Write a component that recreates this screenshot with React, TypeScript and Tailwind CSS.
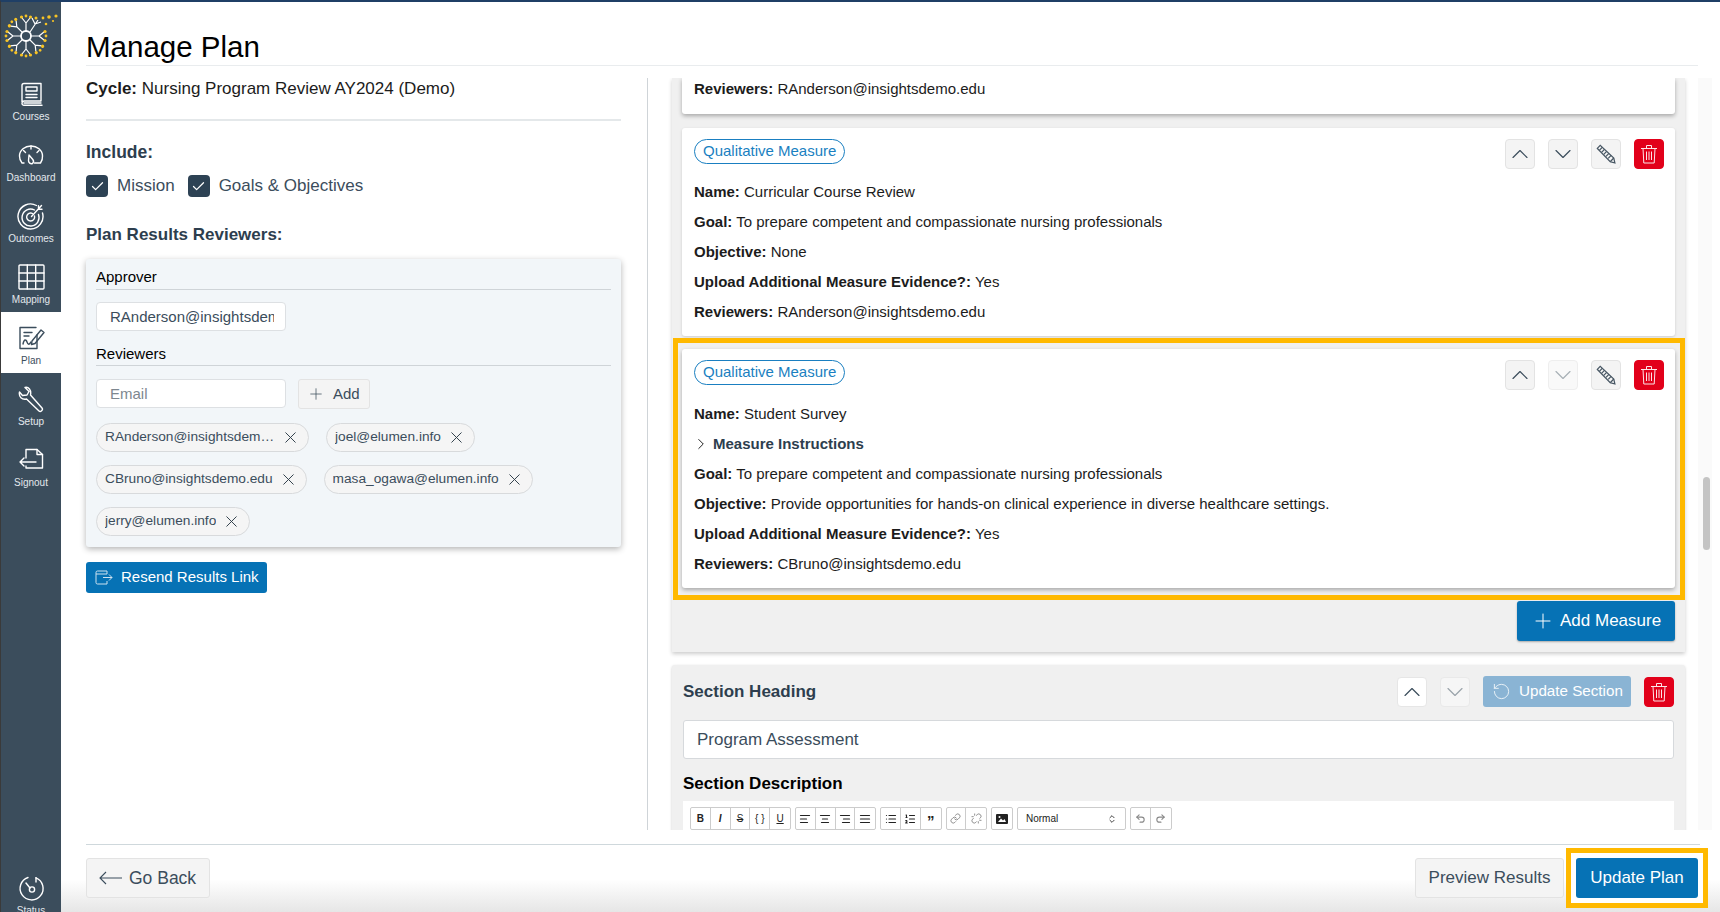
import React from "react";
import { ChevronUp, ChevronDown, ChevronRight, Plus, X, Check, RotateCw, AlignLeft, AlignCenter, AlignRight, AlignJustify, List, ListOrdered, Link, Unlink, Undo2, Redo2, ChevronsUpDown } from "lucide-react";

const Logo = () => {
  const cx = 24, cy = 34;
  const angles = [0, 45, 90, 135, 180, 225, 270];
  return (
    <svg width="60" height="60" viewBox="0 0 60 60" className="block">
      <circle cx={cx} cy={cy} r="5" fill="none" stroke="#fff" strokeWidth="1.8" />
      {angles.map((a) => (
        <g key={a} transform={`rotate(${a} ${cx} ${cy})`}>
          <path d={`M${cx + 5} ${cy}H${cx + 14}M${cx + 13} ${cy}l5 -4M${cx + 13} ${cy}l5 4`} stroke="#fff" strokeWidth="1.2" fill="none" />
          <circle cx={cx + 19} cy={cy - 4.5} r="1.6" fill="#f7c325" />
          <circle cx={cx + 19} cy={cy + 4.5} r="1.6" fill="#f7c325" />
          <circle cx={cx + 20} cy={cy} r="1.4" fill="#f7c325" />
        </g>
      ))}
      <path d="M28 30L36 18M33 22L30 16M33 22L39 20" stroke="#fff" strokeWidth="1.2" fill="none" />
      <circle cx="44" cy="22" r="1.3" fill="#f7c325" />
      <circle cx="47" cy="15" r="1.8" fill="#f7c325" />
      <circle cx="54" cy="14" r="1.6" fill="#f7c325" />
      <circle cx="51" cy="19" r="1.1" fill="#f7c325" />
      <circle cx="34" cy="16" r="1.5" fill="#f7c325" />
      <circle cx="41" cy="16" r="1.4" fill="#f7c325" />
    </svg>
  );
};

const stroke = { fill: "none", stroke: "currentColor", strokeWidth: 1.4, strokeLinecap: "round" as const, strokeLinejoin: "round" as const };
const S = ({ children }: { children: React.ReactNode }) => (
  <svg width="28" height="28" viewBox="0 0 28 28" {...stroke}>{children}</svg>
);
const icons: Record<string, React.ReactNode> = {
  Courses: <S><path d="M5 22V5.5A2 2 0 0 1 7 3.5H24V21H7A2.2 2.2 0 0 0 5 23A2 2 0 0 0 7 25.3H25" /><rect x="9" y="7" width="11" height="4" /><path d="M9 14.5H20M9 17.5H20M7 23H24" /></S>,
  Dashboard: <S><path d="M7 22H5A10.5 10.5 0 0 1 2.5 15C2.5 9 8 5 14 5S25.5 9 25.5 15A10.5 10.5 0 0 1 23.5 22H17.5" /><path d="M15.5 22.5A3 3 0 0 1 11.5 19.5L12 14L15.8 18.5A3 3 0 0 1 15.5 22.5Z" /><path d="M14 5V8M6.5 9.5L8.5 11.5M22 9.5L20 11.5" /></S>,
  Outcomes: <S><path d="M19.5 3.5A12.5 12.5 0 1 0 25.5 11" /><path d="M17.5 8A8.5 8.5 0 1 0 21.5 12.5" /><path d="M15.5 11.5A4 4 0 1 0 17.5 14" /><path d="M14.5 14.5L24.5 3.5M21.5 3.8V7.3H25" /></S>,
  Mapping: <S><rect x="2" y="2" width="25" height="24" rx="1" /><path d="M2 10H27M2 18H27M10.3 2V26M18.7 2V26" /></S>,
  Plan: <S><path d="M20 11V24.5H3V3.5H19" /><path d="M7 8.5H15M7 12H12M6 20C7 15 9 15 10 18S12 21 14 18" /><path d="M15 17L24 6L27 8.5L18 19.5L14.5 20.5Z" /></S>,
  Setup: <S><path d="M8 2.5L12 6.5L10 10L5.5 10.5L2.5 7C1.5 12 5 15 9.5 14L22 26C23.5 27.5 26.5 25 25 23L13.5 10C14.5 5 11.5 1.5 8 2.5Z" /></S>,
  Signout: <S><path d="M9 12V3.5H20L25.5 8.5V22H9V20" /><path d="M20 3.5V8.5H25.5" /><path d="M19 16H3M7 12L3 16L7 20" /></S>,
  Status: <S><path d="M11 3.5A11.5 11.5 0 1 0 19 3.8" /><path d="M19 3.8V8" /><circle cx="15" cy="15.5" r="2.6" /><path d="M13 14L9 9" /></S>,
};

const NavItem = ({ name, active }: { name: string; active?: boolean }) => (
  <div className={`h-[61px] flex flex-col items-center pt-[12px] ${active ? "bg-white text-[#3b4d5c]" : "text-white"}`}>
    <div className="h-[28px] flex items-center">{icons[name]}</div>
    <div className={`mt-[2px] text-[10px] leading-[14px] ${active ? "text-[#3b4d5c]" : "text-[#e3e8ec]"}`}>{name}</div>
  </div>
);

const Trash = () => (
  <svg width="18" height="20" viewBox="0 0 18 20" fill="none" stroke="#fff" strokeWidth="1" opacity="0.9">
    <path d="M1 4.5H17M3 4.5L3.8 19H14.2L15 4.5M6.5 4.5V1.5H11.5V4.5M6.5 7.5V16M9 7.5V16M11.5 7.5V16" />
  </svg>
);

const IconBtn = ({ children, className = "" }: { children: React.ReactNode; className?: string }) => (
  <div className={`w-[30px] h-[30px] rounded-[4px] border flex items-center justify-center ${className}`}>{children}</div>
);

const PencilIcon = () => (
  <svg width="20" height="20" viewBox="0 0 18 18" fill="none" stroke="#475663" strokeWidth="1.1">
    <path d="M1.2 4L3.8 1.2L16 12.6L17 17L12.8 16Z" />
    <path d="M3 5.8L5.6 3M5 7.6L7.6 4.8M7 9.4L9.6 6.6M9 11.2L11.6 8.4M11 13L13.6 10.2M12.8 16L16 12.6" />
  </svg>
);

const Actions = ({ downDisabled }: { downDisabled?: boolean }) => (
  <div className="flex gap-[13px]">
    <IconBtn className="bg-[#f4f4f4] border-[#e3e3e3]"><ChevronUp size={28} strokeWidth={1} className="text-[#3b4d5c]" /></IconBtn>
    <IconBtn className={downDisabled ? "bg-[#f9f9f9] border-[#eeeeee]" : "bg-[#f4f4f4] border-[#e3e3e3]"}>
      <ChevronDown size={28} strokeWidth={1} className={downDisabled ? "text-[#a8b0b6]" : "text-[#3b4d5c]"} />
    </IconBtn>
    <IconBtn className="bg-[#f4f4f4] border-[#e3e3e3]"><PencilIcon /></IconBtn>
    <IconBtn className="bg-[#e2001a] border-[#e2001a]"><Trash /></IconBtn>
  </div>
);

const Line = ({ k, v }: { k: string; v: string }) => (
  <div className="h-[30px] leading-[30px]"><b className="font-bold">{k}</b> {v}</div>
);

const Pill = () => (
  <div className="inline-flex items-center h-[25px] px-[8px] rounded-full border border-[#1a7fc1] text-[#1a7fc1] bg-white text-[15px]">Qualitative Measure</div>
);

const Chip = ({ t, w }: { t: string; w?: string }) => (
  <div className="inline-flex items-center h-[29px] pl-[8px] pr-[8px] rounded-full border border-[#d8dadc] bg-[#f5f5f5] text-[13.7px] text-[#3b4d5c]">
    <span className={`truncate ${w ?? ""}`}>{t}</span>
    <X size={19} strokeWidth={1.2} className="ml-[6px] text-[#2b3a46]" />
  </div>
);

const Tb = ({ children, dim }: { children: React.ReactNode; dim?: boolean }) => (
  <div className={`w-[19.8px] h-[21px] flex items-center justify-center border-r last:border-r-0 border-[#cccccc] text-[10px] ${dim ? "text-[#888888]" : "text-[#222222]"}`}>{children}</div>
);
const TbGroup = ({ children }: { children: React.ReactNode }) => (
  <div className="flex border border-[#cccccc] rounded-[2px] bg-white">{children}</div>
);

const Field = ({ children, muted }: { children: React.ReactNode; muted?: boolean }) => (
  <div className={`w-[190px] h-[29px] rounded-[4px] border border-[#dde0e3] bg-white pl-[13px] pr-[11px] text-[15px] leading-[27px] ${muted ? "text-[#7d8790]" : "text-[#3b4d5c]"}`}>
    <div className="overflow-hidden whitespace-nowrap">{children}</div>
  </div>
);

export default function App() {
  return (
    <div className="w-[1720px] h-[912px] overflow-hidden flex bg-white text-[#1c1c1c] font-['Liberation_Sans',Arial,sans-serif]">
      <aside className="w-[61px] shrink-0 h-full bg-[#3b4d5c] border-l border-[#3a3a3a] flex flex-col border-t-2 border-t-[#1f3f66]">
        <div className="h-[66px] pl-[1px]"><Logo /></div>
        {["Courses", "Dashboard", "Outcomes", "Mapping"].map((n) => <NavItem key={n} name={n} />)}
        <NavItem name="Plan" active />
        {["Setup", "Signout"].map((n) => <NavItem key={n} name={n} />)}
        <div className="mt-auto mb-[-11px]"><NavItem name="Status" /></div>
      </aside>

      <main className="flex-1 min-w-0 flex flex-col border-t-2 border-[#1f3f66]">
        <div className="h-[64px] ml-[25px] mr-[22px] border-b border-[#e9ecee] flex items-end shrink-0">
          <h1 className="text-[29.5px] leading-[34px] mb-[1px] text-black">Manage Plan</h1>
        </div>

        <div className="h-[752px] mt-[12px] shrink-0 flex overflow-hidden">
          {/* left */}
          <section className="w-[587px] shrink-0 pl-[25px] pr-[26px] border-r border-[#cfd4d8]">
            <div className="h-[21px] mt-0 text-[17px] leading-[21px]"><b>Cycle:</b> Nursing Program Review AY2024 (Demo)</div>
            <div className="h-[2px] bg-[#e4e8ea] mt-[20px]" />
            <div className="mt-[20px] text-[17.5px] leading-[22px] font-bold text-[#2d3e4e]">Include:</div>
            <div className="mt-[12px] flex items-center text-[17px] leading-[22px] text-[#3b4d5c]">
              <span className="w-[22px] h-[22px] rounded-[4px] bg-[#2d4254] flex items-center justify-center"><Check size={15} strokeWidth={2} className="text-white" /></span>
              <span className="ml-[9px]">Mission</span>
              <span className="w-[22px] h-[22px] ml-[13px] rounded-[4px] bg-[#2d4254] flex items-center justify-center"><Check size={15} strokeWidth={2} className="text-white" /></span>
              <span className="ml-[9px]">Goals &amp; Objectives</span>
            </div>
            <div className="mt-[27px] text-[17px] leading-[22px] font-bold text-[#2d3e4e]">Plan Results Reviewers:</div>
            <div className="mt-[13px] h-[288px] bg-[#f2f6f9] rounded-[3px] shadow-[0_2px_6px_rgba(0,0,0,0.3)] px-[10px] pt-[8px]">
              <div className="h-[23px] border-b border-[#cfd4d8] text-[15px] leading-[20px] text-black">Approver</div>
              <div className="mt-[12px]"><Field>RAnderson@insightsdemo.edu</Field></div>
              <div className="mt-[13px] h-[22px] border-b border-[#cfd4d8] text-[15px] leading-[20px] text-black">Reviewers</div>
              <div className="mt-[13px] flex items-start gap-[12px]">
                <Field muted>Email</Field>
                <div className="w-[72px] h-[30px] rounded-[3px] border border-[#e3e3e3] bg-[#f4f4f4] flex items-center pl-[8px] text-[15px] text-[#3b4d5c]"><Plus size={18} strokeWidth={1} className="mr-[8px]" />Add</div>
              </div>
              <div className="mt-[14px] flex gap-[17px]">
                <Chip t="RAnderson@insightsdemo.edu" w="w-[170px]" /><Chip t="joel@elumen.info" />
              </div>
              <div className="mt-[13px] flex gap-[17px]">
                <Chip t="CBruno@insightsdemo.edu" /><Chip t="masa_ogawa@elumen.info" />
              </div>
              <div className="mt-[13px] flex gap-[17px]">
                <Chip t="jerry@elumen.info" />
              </div>
            </div>
            <div className="mt-[15px] w-[181px] h-[31px] rounded-[3px] bg-[#0672b5] text-white text-[15px] flex items-center pl-[9px]">
              <svg width="18" height="15" viewBox="0 0 18 15" fill="none" stroke="#ffffff" strokeWidth="1" className="mr-[8px] opacity-80">
                <path d="M12 4V1H2.5A1.5 1.5 0 0 0 1 2.5V12.5A1.5 1.5 0 0 0 2.5 14H12V11M1 4H12M8 7.5H17M14 4.5L17 7.5L14 10.5" />
              </svg>
              Resend Results Link
            </div>
          </section>

          {/* right */}
          <section className="flex-1 min-w-0 flex pl-[24px] overflow-hidden">
            <div className="w-[1013px] shrink-0 text-[15px]">
              <div className="bg-[#f0f0f0] px-[10px] pb-[11px] shadow-[0_2px_4px_rgba(0,0,0,0.2)]">
                <div className="h-[36px] bg-white rounded-b-[3px] shadow-[0_2px_4px_rgba(0,0,0,0.3)] pl-[12px]">
                  <div className="-translate-y-[4px]"><Line k="Reviewers:" v="RAnderson@insightsdemo.edu" /></div>
                </div>
                <div className="mt-[14px] h-[208px] bg-white rounded-[3px] pl-[12px] pr-[11px] pt-[11px] shadow-[0_1px_3px_rgba(0,0,0,0.15)]">
                  <div className="flex items-start justify-between h-[38px]"><Pill /><Actions /></div>
                  <Line k="Name:" v="Curricular Course Review" />
                  <Line k="Goal:" v="To prepare competent and compassionate nursing professionals" />
                  <Line k="Objective:" v="None" />
                  <Line k="Upload Additional Measure Evidence?:" v="Yes" />
                  <Line k="Reviewers:" v="RAnderson@insightsdemo.edu" />
                </div>
                <div className="mt-[2px] -ml-[9px] -mr-[10px] border-[5px] border-[#ffb900] pl-[4px] pr-[5px] pt-[6px] pb-[7px] bg-[#f0f0f0]">
                  <div className="h-[239px] bg-white rounded-[3px] pl-[12px] pr-[11px] pt-[11px] shadow-[0_2px_4px_rgba(0,0,0,0.3)]">
                    <div className="flex items-start justify-between h-[39px]"><Pill /><Actions downDisabled /></div>
                    <Line k="Name:" v="Student Survey" />
                    <div className="h-[30px] leading-[30px] flex items-center font-bold text-[#2d3e4e]">
                      <ChevronRight size={18} strokeWidth={1.3} className="-ml-[2px] mr-[3px] text-[#1c1c1c]" />Measure Instructions
                    </div>
                    <Line k="Goal:" v="To prepare competent and compassionate nursing professionals" />
                    <Line k="Objective:" v="Provide opportunities for hands-on clinical experience in diverse healthcare settings." />
                    <Line k="Upload Additional Measure Evidence?:" v="Yes" />
                    <Line k="Reviewers:" v="CBruno@insightsdemo.edu" />
                  </div>
                </div>
                <div className="mt-[1px] flex justify-end">
                  <div className="w-[158px] h-[40px] rounded-[3px] bg-[#0672b5] text-white text-[17px] flex items-center pl-[14px] shadow-[0_1px_2px_rgba(0,0,0,0.3)]"><Plus size={24} strokeWidth={1} className="mr-[5px]" />Add Measure</div>
                </div>
              </div>

              <div className="mt-[13px] bg-[#f0f0f0] rounded-t-[3px] px-[11px] pt-[11px] shadow-[0_1px_3px_rgba(0,0,0,0.2)] h-[200px]">
                <div className="flex items-center h-[31px]">
                  <div className="flex-1 text-[17px] font-bold text-[#2d3e4e]">Section Heading</div>
                  <div className="flex items-center gap-[13px]">
                    <IconBtn className="bg-white border-[#e6e6e6]"><ChevronUp size={28} strokeWidth={1} className="text-[#3b4d5c]" /></IconBtn>
                    <IconBtn className="bg-[#f6f6f6] border-[#e9e9e9]"><ChevronDown size={28} strokeWidth={1} className="text-[#9aa3aa]" /></IconBtn>
                    <div className="w-[148px] h-[31px] rounded-[3px] bg-[#8ab4d4] text-white text-[15.2px] flex items-center pl-[9px]"><RotateCw size={19} strokeWidth={1} className="mr-[8px] -scale-x-100" />Update Section</div>
                    <IconBtn className="bg-[#e2001a] border-[#e2001a]"><Trash /></IconBtn>
                  </div>
                </div>
                <div className="mt-[13px] h-[39px] rounded-[3px] border border-[#d6d9dc] bg-white pl-[13px] text-[17px] leading-[37px] text-[#3b4d5c]">Program Assessment</div>
                <div className="mt-[14px] text-[17px] leading-[22px] font-bold text-black">Section Description</div>
                <div className="mt-[6px] h-[60px] bg-white px-[7px] pt-[6px] flex items-start gap-[4px]">
                  <TbGroup>
                    <Tb><b className="font-bold">B</b></Tb>
                    <Tb><i className="font-bold">I</i></Tb>
                    <Tb><span className="line-through">S</span></Tb>
                    <Tb>{"{ }"}</Tb>
                    <Tb><u>U</u></Tb>
                  </TbGroup>
                  <TbGroup>
                    <Tb><AlignLeft size={12} strokeWidth={2.4} /></Tb><Tb><AlignCenter size={12} strokeWidth={2.4} /></Tb><Tb><AlignRight size={12} strokeWidth={2.4} /></Tb><Tb><AlignJustify size={12} strokeWidth={2.4} /></Tb>
                  </TbGroup>
                  <TbGroup>
                    <Tb><List size={12} strokeWidth={2.4} /></Tb><Tb><ListOrdered size={12} strokeWidth={2.2} /></Tb><Tb><b className="font-bold text-[15px] leading-[20px] pt-[4px]">”</b></Tb>
                  </TbGroup>
                  <TbGroup>
                    <Tb dim><Link size={11} /></Tb><Tb dim><Unlink size={11} /></Tb>
                  </TbGroup>
                  <TbGroup>
                    <Tb>
                      <svg width="12" height="10" viewBox="0 0 12 10"><rect width="12" height="10" rx="1" fill="#222222" /><path d="M2 8L5 4.5L7 6.5L8.5 5L10 8Z" fill="#ffffff" /><circle cx="3.5" cy="3" r="1" fill="#ffffff" /></svg>
                    </Tb>
                  </TbGroup>
                  <div className="w-[109px] h-[23px] border border-[#cccccc] rounded-[2px] bg-white flex items-center justify-between px-[8px] text-[10px] text-[#222222]">Normal<ChevronsUpDown size={10} /></div>
                  <TbGroup><Tb dim><Undo2 size={11} strokeWidth={2.4} /></Tb><Tb dim><Redo2 size={11} strokeWidth={2.4} /></Tb></TbGroup>
                </div>
              </div>
            </div>
            <div className="ml-[13px] w-[14px] shrink-0 bg-[#fafafa] relative">
              <div className="absolute left-[5px] w-[7px] top-[399px] h-[73px] rounded-full bg-[#c4c4c4]" />
            </div>
          </section>
        </div>

        <div className="flex-1 pl-[25px] pr-[20px] bg-gradient-to-b from-white from-60% to-[#e6e6e6]">
          <div className="mt-[14px] border-t border-[#cfd8dc] pt-[3px] flex items-center h-[64px]">
            <div className="w-[124px] h-[40px] rounded-[3px] border border-[#e3e3e3] bg-[#f4f4f4] flex items-center pl-[12px] text-[17.5px] text-[#3b4d5c]">
              <svg width="23" height="14" viewBox="0 0 23 14" fill="none" stroke="currentColor" strokeWidth="1.1" className="mr-[7px]"><path d="M23 7H1M7 1L1 7L7 13" /></svg>
              Go Back
            </div>
            <div className="ml-auto w-[149px] h-[40px] rounded-[3px] border border-[#e3e3e3] bg-[#f4f4f4] flex items-center justify-center text-[17px] text-[#3b4d5c]">Preview Results</div>
            <div className="ml-[2px] -mr-[8px] border-[5px] border-[#ffb900] p-[5px] bg-white">
              <div className="w-[122px] h-[40px] rounded-[3px] bg-[#0672b5] text-white text-[17px] flex items-center justify-center">Update Plan</div>
            </div>
          </div>
        </div>
      </main>
    </div>
  );
}
